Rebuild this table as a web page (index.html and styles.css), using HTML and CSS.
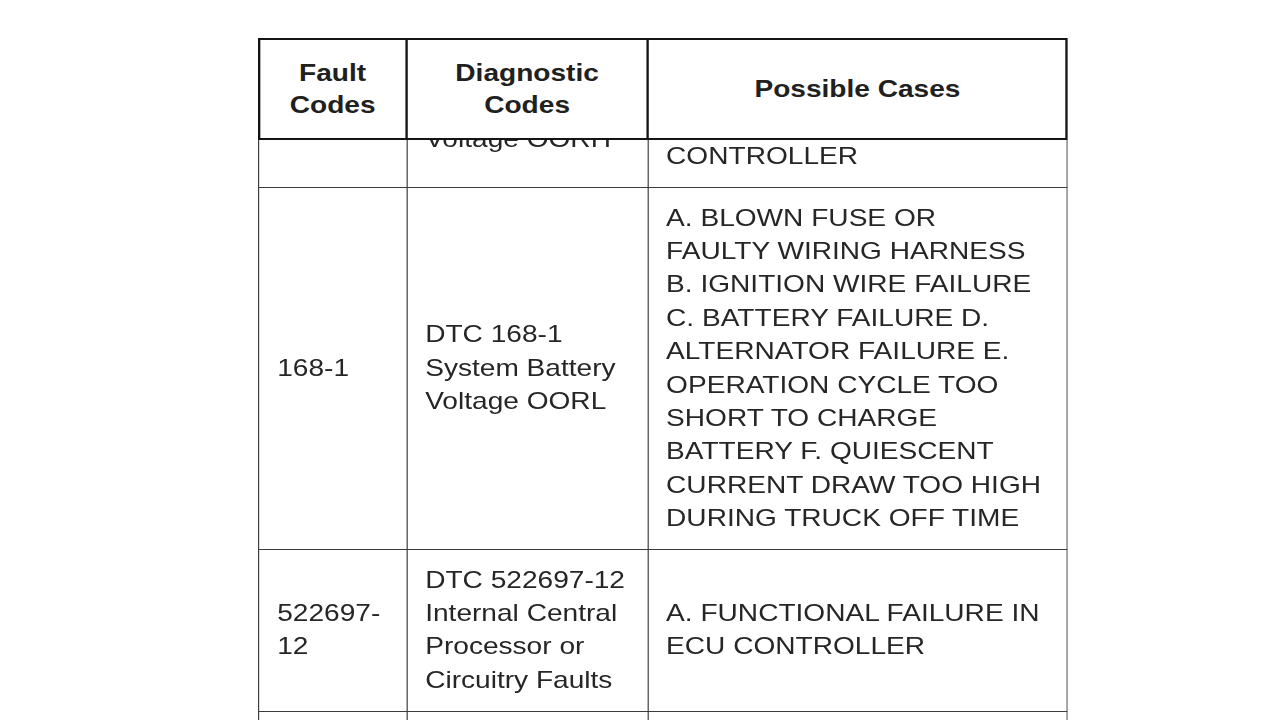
FILE: index.html
```html
<!DOCTYPE html>
<html lang="en">
<head>
<meta charset="utf-8">
<title>Fault Codes</title>
<link rel="stylesheet" href="styles.css">
</head>
<body>
<main class="page">
  <section class="sheet">
    <div class="head">
      <div class="hcell">Fault Codes</div>
      <div class="hcell">Diagnostic Codes</div>
      <div class="hcell">Possible Cases</div>
    </div>
    <div class="viewport">
      <div class="rows">
        <div class="row">
          <div class="cell code">168-0</div>
          <div class="cell diag">DTC 168-0 System Battery Voltage OORH</div>
          <div class="cell cases">A. VOLTAGE REGULATOR FAILURE B. FUNCTIONAL FAILURE IN ECU CONTROLLER</div>
        </div>
        <div class="row">
          <div class="cell code">168-1</div>
          <div class="cell diag">DTC 168-1 System Battery Voltage OORL</div>
          <div class="cell cases">A. BLOWN FUSE OR FAULTY WIRING HARNESS B. IGNITION WIRE FAILURE C. BATTERY FAILURE D. ALTERNATOR FAILURE E. OPERATION CYCLE TOO SHORT TO CHARGE BATTERY F. QUIESCENT CURRENT DRAW TOO HIGH DURING TRUCK OFF TIME</div>
        </div>
        <div class="row">
          <div class="cell code">522697-12</div>
          <div class="cell diag">DTC 522697-12 Internal Central Processor or Circuitry Faults</div>
          <div class="cell cases">A. FUNCTIONAL FAILURE IN ECU CONTROLLER</div>
        </div>
        <div class="row">
          <div class="cell code">523420-2</div>
          <div class="cell diag">DTC 523420-2 Tachograph Data Erratic</div>
          <div class="cell cases">A. FAULTY WIRING HARNESS B. FUNCTIONAL FAILURE IN ECU CONTROLLER</div>
        </div>
      </div>
    </div>
  </section>
</main>
</body>
</html>
```

FILE: styles.css
```css
html, body {
  margin: 0;
  padding: 0;
  height: 100%;
  overflow: hidden;
  background: #ffffff;
}

.page {
  height: 720px;
  display: flex;
  justify-content: flex-start;
  padding: 38px 0 0 258px;
  box-sizing: border-box;
  font-family: "Liberation Sans", Arial, sans-serif;
}

/* the source image is horizontally stretched; reproduce it with a uniform scale */
.sheet {
  width: 692.3px;
  height: 682px;
  display: flex;
  flex-direction: column;
  flex: none;
  transform: scaleX(1.17);
  transform-origin: 0 0;
}

.head {
  display: grid;
  grid-template-columns: 125.6px 206.8px 1fr;
  border: 2px solid #141414;
  background: #fff;
  color: #202020;
  flex: none;
}

.hcell {
  box-sizing: border-box;
  padding: 17px 10px;
  min-height: 98px;
  display: flex;
  align-items: center;
  justify-content: center;
  text-align: center;
  font-weight: bold;
  font-size: 24px;
  line-height: 32px;
  border-right: 2px solid #141414;
}

.hcell:last-child {
  border-right: none;
}

.viewport {
  flex: 1;
  overflow: hidden;
}

.rows {
  margin-top: -113.6px;
}

.row {
  display: grid;
  grid-template-columns: 126.5px 206.8px 1fr;
  border-left: 1px solid #3c3c3c;
  border-bottom: 1px solid #3c3c3c;
}

.cell {
  box-sizing: border-box;
  display: flex;
  align-items: center;
  padding: 12.5px 15.4px 14.5px;
  border-right: 1px solid #3c3c3c;
  color: #262626;
  font-size: 24px;
  line-height: 33.4px;
}

.cell.cases {
  padding-left: 14.5px;
  padding-right: 19.5px;
  border-right-color: #6a6a6a;
}
```
